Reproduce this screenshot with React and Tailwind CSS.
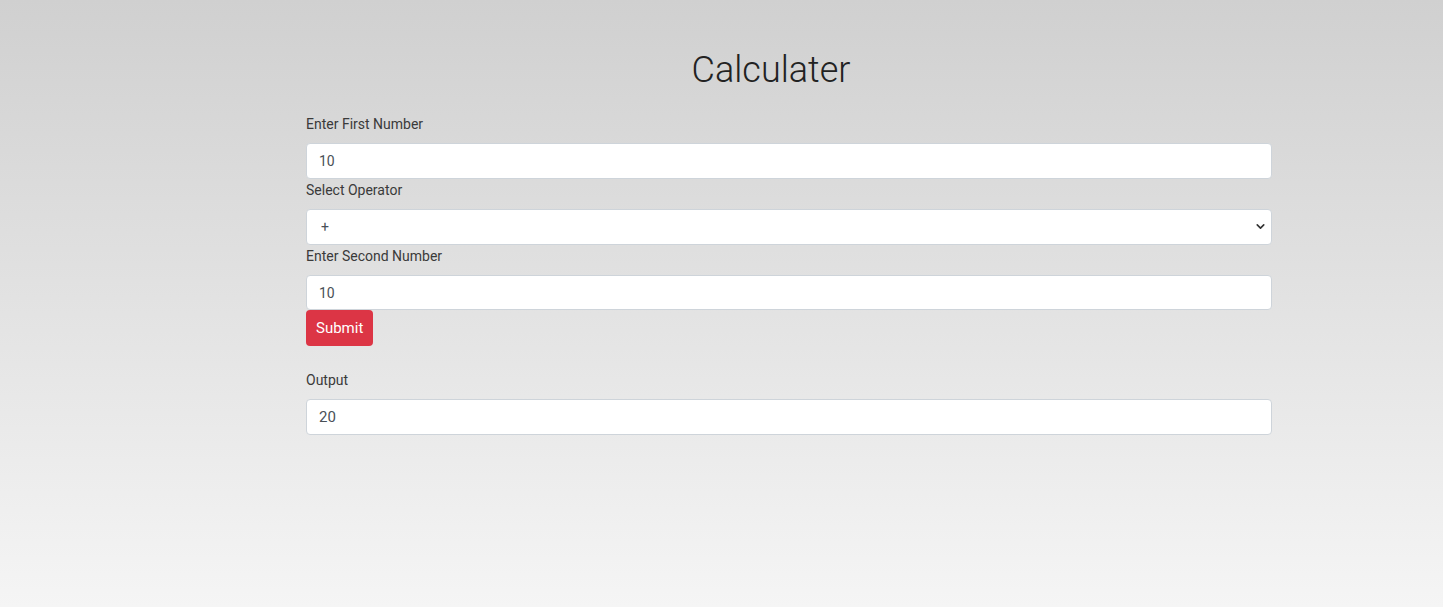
import React, { useState } from 'react';
import { ChevronDown } from 'lucide-react';

const App = () => {
  const [first, setFirst] = useState('10');
  const [op, setOp] = useState('+');
  const [second, setSecond] = useState('10');
  const [output, setOutput] = useState('20');

  const handleSubmit = (e) => {
    e.preventDefault();
    const a = parseFloat(first);
    const b = parseFloat(second);
    let r = 0;
    if (op === '+') r = a + b;
    if (op === '-') r = a - b;
    if (op === '*') r = a * b;
    if (op === '/') r = a / b;
    setOutput(String(r));
  };

  return (
    <div className="min-h-[607px] bg-gradient-to-b from-[#d0d0d0] to-[#f5f5f5] font-['Roboto',sans-serif]">
      <div className="w-[966px] ml-[306px] pt-[45px]">
        {/* Titulo */}
        <h1 className="text-[36px] leading-[50px] font-light text-[#222] text-center pr-[36px] mb-[19px]">Calculater</h1>

        <form onSubmit={handleSubmit}>
          <label className="block text-[14px] leading-[21px] text-[#3a3a3a] mb-[8px]">Enter First Number</label>
          <input
            value={first}
            onChange={(e) => setFirst(e.target.value)}
            className="block w-full h-[36px] px-[12px] text-[14px] text-[#495057] bg-white border border-[#ced4da] rounded-[4px] outline-none"
          />

          <label className="block text-[14px] leading-[21px] text-[#3a3a3a] mt-[1px] mb-[8px]">Select Operator</label>
          <div className="relative">
            <select
              value={op}
              onChange={(e) => setOp(e.target.value)}
              className="block w-full h-[36px] px-[14px] text-[14px] text-[#495057] bg-white border border-[#ced4da] rounded-[4px] appearance-none outline-none"
            >
              <option value="+">+</option>
              <option value="-">-</option>
              <option value="*">*</option>
              <option value="/">/</option>
            </select>
            <ChevronDown size={13} strokeWidth={3} className="absolute right-[5px] top-[11px] text-[#333] pointer-events-none" />
          </div>

          <label className="block text-[14px] leading-[21px] text-[#3a3a3a] mt-[1px] mb-[8px]">Enter Second Number</label>
          <input
            value={second}
            onChange={(e) => setSecond(e.target.value)}
            className="block w-full h-[35px] px-[12px] text-[14px] text-[#495057] bg-white border border-[#ced4da] rounded-[4px] outline-none"
          />

          <button
            type="submit"
            className="block h-[36px] px-[10px] text-[15px] text-white bg-[#dc3545] rounded-[4px]"
          >
            Submit
          </button>

          <label className="block text-[14px] leading-[21px] text-[#3a3a3a] mt-[24px] mb-[8px]">Output</label>
          <input
            value={output}
            readOnly
            className="block w-full h-[36px] px-[12px] text-[15px] text-[#495057] bg-white border border-[#ced4da] rounded-[4px] outline-none"
          />
        </form>
      </div>
    </div>
  );
};

export default App;
